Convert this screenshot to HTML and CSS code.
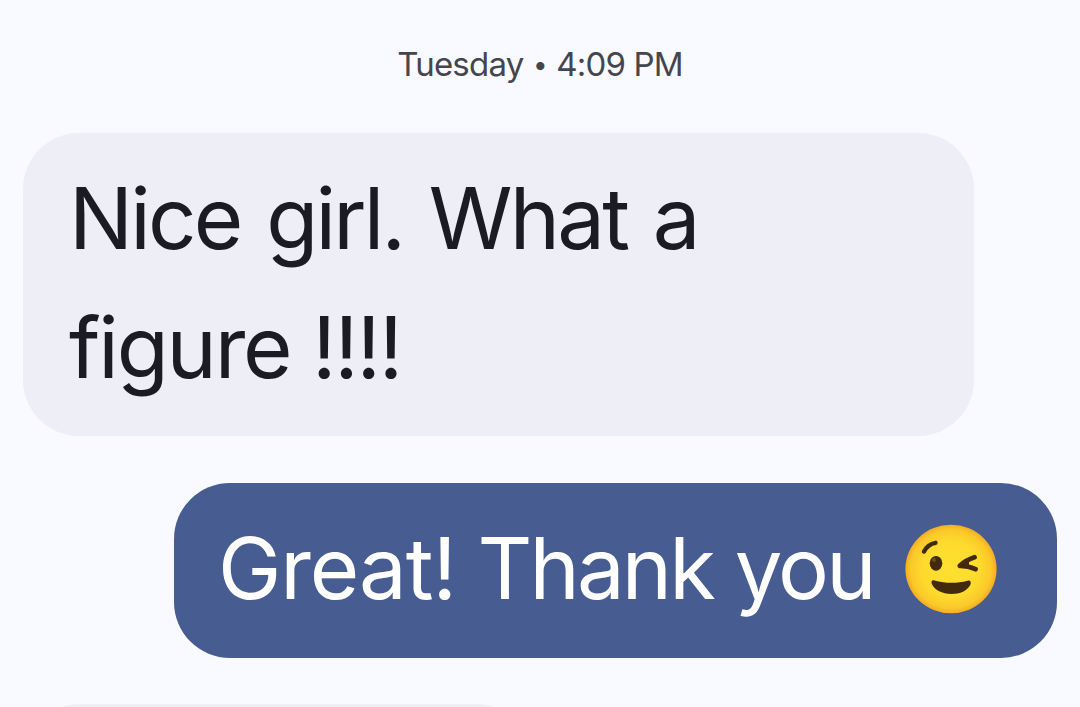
FILE: index.html
```
<!DOCTYPE html>
<html lang="en">
<head>
    <title>Messages</title>
    <meta charset="utf-8">
    <link rel="stylesheet" href="styles.css">
</head>
<body>

<div class="chat">
    <div class="timestamp">Tuesday <span class="bull">•</span> 4:09 PM</div>

    <div class="message received">
        <span class="line first">Nice girl. What a</span>
        <span class="line second">figure !!!!</span>
    </div>

    <div class="message sent">
        <span class="line reply"><span class="loose">Great!</span> Thank you</span>
        <svg class="emoji" viewBox="0 0 92 90" role="img" aria-label="winking face">
            <defs>
                <radialGradient id="face" cx="50%" cy="50%" r="52%">
                    <stop offset="0" stop-color="#fde030"/>
                    <stop offset="0.6" stop-color="#fddb2d"/>
                    <stop offset="0.85" stop-color="#fbc829"/>
                    <stop offset="1" stop-color="#f2a321"/>
                </radialGradient>
            </defs>
            <ellipse cx="46" cy="45" rx="45.6" ry="44.3" fill="url(#face)"/>
            <!-- eyebrow, open eye, wink, mouth -->
            <path d="M19 27.5Q23 20 30.5 18.8" fill="none" stroke="#422b0d" stroke-width="4.4" stroke-linecap="round"/>
            <ellipse cx="31" cy="39.3" rx="6.3" ry="7.4" fill="#422b0d"/>
            <circle cx="29" cy="36" r="2" fill="#6b4c24"/>
            <path d="M69.5 33.3Q61 36 54.8 41.8Q63 41.6 70.5 45.2" fill="none" stroke="#422b0d" stroke-width="4.8" stroke-linecap="round" stroke-linejoin="round"/>
            <path d="M55 41L64 37.5L64 43Z" fill="#422b0d"/>
            <path d="M29.5 56.5C41 59.5 52 59.5 62.5 56.7C65 56 66.2 57.6 65.7 60C62.5 67 55 70 46.5 70C37 70 29.5 66 26.7 59.8C26 57 27.2 55.9 29.5 56.5Z" fill="#422b0d"/>
        </svg>
    </div>

    <div class="message next"></div>
</div>

</body>
</html>
```
FILE: styles.css
```
body {
    margin: 0;
    background: #f8faff;
    font-family: Inter, Roboto, sans-serif;
    overflow: hidden;
}

.chat {
    display: flex;
    flex-direction: column;
    box-sizing: border-box;
    height: 707px;
    padding: 44px 23px 0;
    overflow: hidden;
}

.timestamp {
    height: 40px;
    margin-bottom: 49px;
    line-height: 40px;
    font-size: 33px;
    color: #45464d;
    text-align: center;
    white-space: nowrap;
    letter-spacing: -0.8px;
}

.bull {
    font-size: 26px;
    vertical-align: 2px;
    line-height: 1;
    padding: 0 1px;
}

.message {
    flex-shrink: 0;
    box-sizing: border-box;
    border-radius: 56px;
    font-size: 85px;
    line-height: 129px;
    white-space: nowrap;
}

.line {
    display: block;
}

.first {
    letter-spacing: -2.8px;
    word-spacing: 4.5px;
}

.second {
    letter-spacing: -2.2px;
}

.reply {
    letter-spacing: -2.8px;
    word-spacing: 0.5px;
}

.loose {
    letter-spacing: -1.1px;
}

.received {
    align-self: flex-start;
    width: 951px;
    height: 303px;
    padding: 21px 46px;
    background: #edeef6;
    color: #1a1b23;
}

.sent {
    display: flex;
    align-self: flex-end;
    justify-content: space-between;
    align-items: center;
    width: 883px;
    height: 175px;
    margin-top: 47px;
    padding: 0 60px 4px 44px;
    background: #475c90;
    color: #fff;
}

.emoji {
    flex-shrink: 0;
    width: 92px;
    height: 90px;
}

.next {
    width: 510px;
    height: 175px;
    margin-top: 46px;
    background: #eeeff4;
}
```
